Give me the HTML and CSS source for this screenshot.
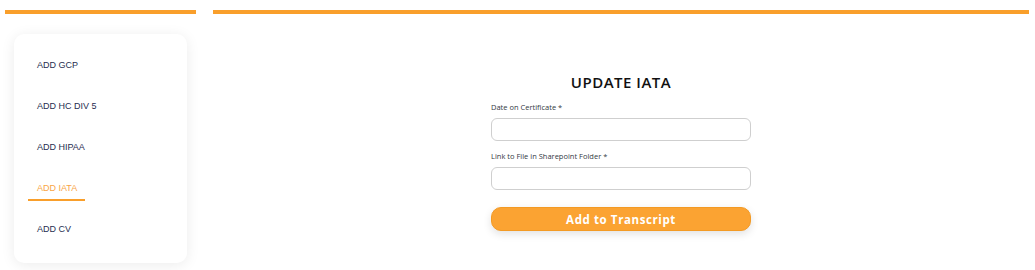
FILE: index.html
```html
<!DOCTYPE html>
<html>
<head>
<meta charset="utf-8">
<link rel="stylesheet" href="styles.css">
</head>
<body>
<div class="page">
  <aside class="side">
    <div class="bar"></div>
    <nav class="card">
      <div class="item"><span class="link">ADD GCP</span></div>
      <div class="item"><span class="link">ADD HC DIV 5</span></div>
      <div class="item"><span class="link">ADD HIPAA</span></div>
      <div class="item"><span class="link active">ADD IATA</span></div>
      <div class="item"><span class="link">ADD CV</span></div>
    </nav>
  </aside>
  <main class="main">
    <div class="bar"></div>
    <form class="form">
      <h1 class="title">UPDATE IATA</h1>
      <label class="label first">Date on Certificate *</label>
      <input class="input" type="text">
      <label class="label">Link to File in Sharepoint Folder *</label>
      <input class="input" type="text">
      <button class="btn" type="button">Add to Transcript</button>
    </form>
  </main>
</div>
</body>
</html>
```
FILE: styles.css
```css
html, body {
  margin: 0;
  padding: 0;
  background: #ffffff;
}
.page {
  display: flex;
  width: 1035px;
  height: 270px;
  overflow: hidden;
}
.bar {
  height: 4px;
  margin-top: 10px;
  background: #f99f2b;
}
.side {
  width: 191px;
  margin-left: 5px;
  flex: none;
}
.card {
  margin-top: 20px;
  margin-left: 9px;
  width: 173px;
  height: 229px;
  box-sizing: border-box;
  padding: 10px 0 13px 14px;
  background: #fff;
  border-radius: 10px;
  box-shadow: 0 2px 14px rgba(0,0,0,0.08);
}
.item {
  height: 41px;
  display: flex;
  align-items: center;
}
.link {
  display: inline-block;
  font-family: "Liberation Sans", Arial, sans-serif;
  font-size: 9px;
  line-height: 12px;
  color: #1f2d50;
  padding: 0 8px 5px 9px;
  margin-top: 7px;
  border-bottom: 2px solid transparent;
}
.link.active {
  color: #f9a545;
  border-bottom-color: #f99f2b;
}
.main {
  flex: none;
  width: 816px;
  margin-left: 17px;
}
.form {
  width: 260px;
  margin: 58px auto 0;
  display: flex;
  flex-direction: column;
}
.title {
  margin: 0;
  text-align: center;
  font-family: "Open Sans", sans-serif;
  font-weight: 600;
  font-size: 15px;
  line-height: 20px;
  letter-spacing: 0.5px;
  color: #111;
}
.label {
  font-family: "Open Sans", sans-serif;
  font-size: 7.5px;
  line-height: 12px;
  color: #333a44;
  margin-top: 9px;
  margin-bottom: 5px;
}
.input {
  box-sizing: border-box;
  height: 23px;
  width: 260px;
  margin: 0;
  border: 1px solid #cfcfcf;
  border-radius: 6px;
  background: #fff;
}
.btn {
  margin-top: 17px;
  height: 24px;
  width: 260px;
  border: 1px solid #f39a24;
  border-radius: 10px;
  background: #fba332;
  color: #fff;
  font-family: "Open Sans", sans-serif;
  font-weight: 700;
  font-size: 11.5px;
  letter-spacing: 0.6px;
  box-shadow: 0 3px 8px rgba(0,0,0,0.12);
  padding: 0;
}
```
